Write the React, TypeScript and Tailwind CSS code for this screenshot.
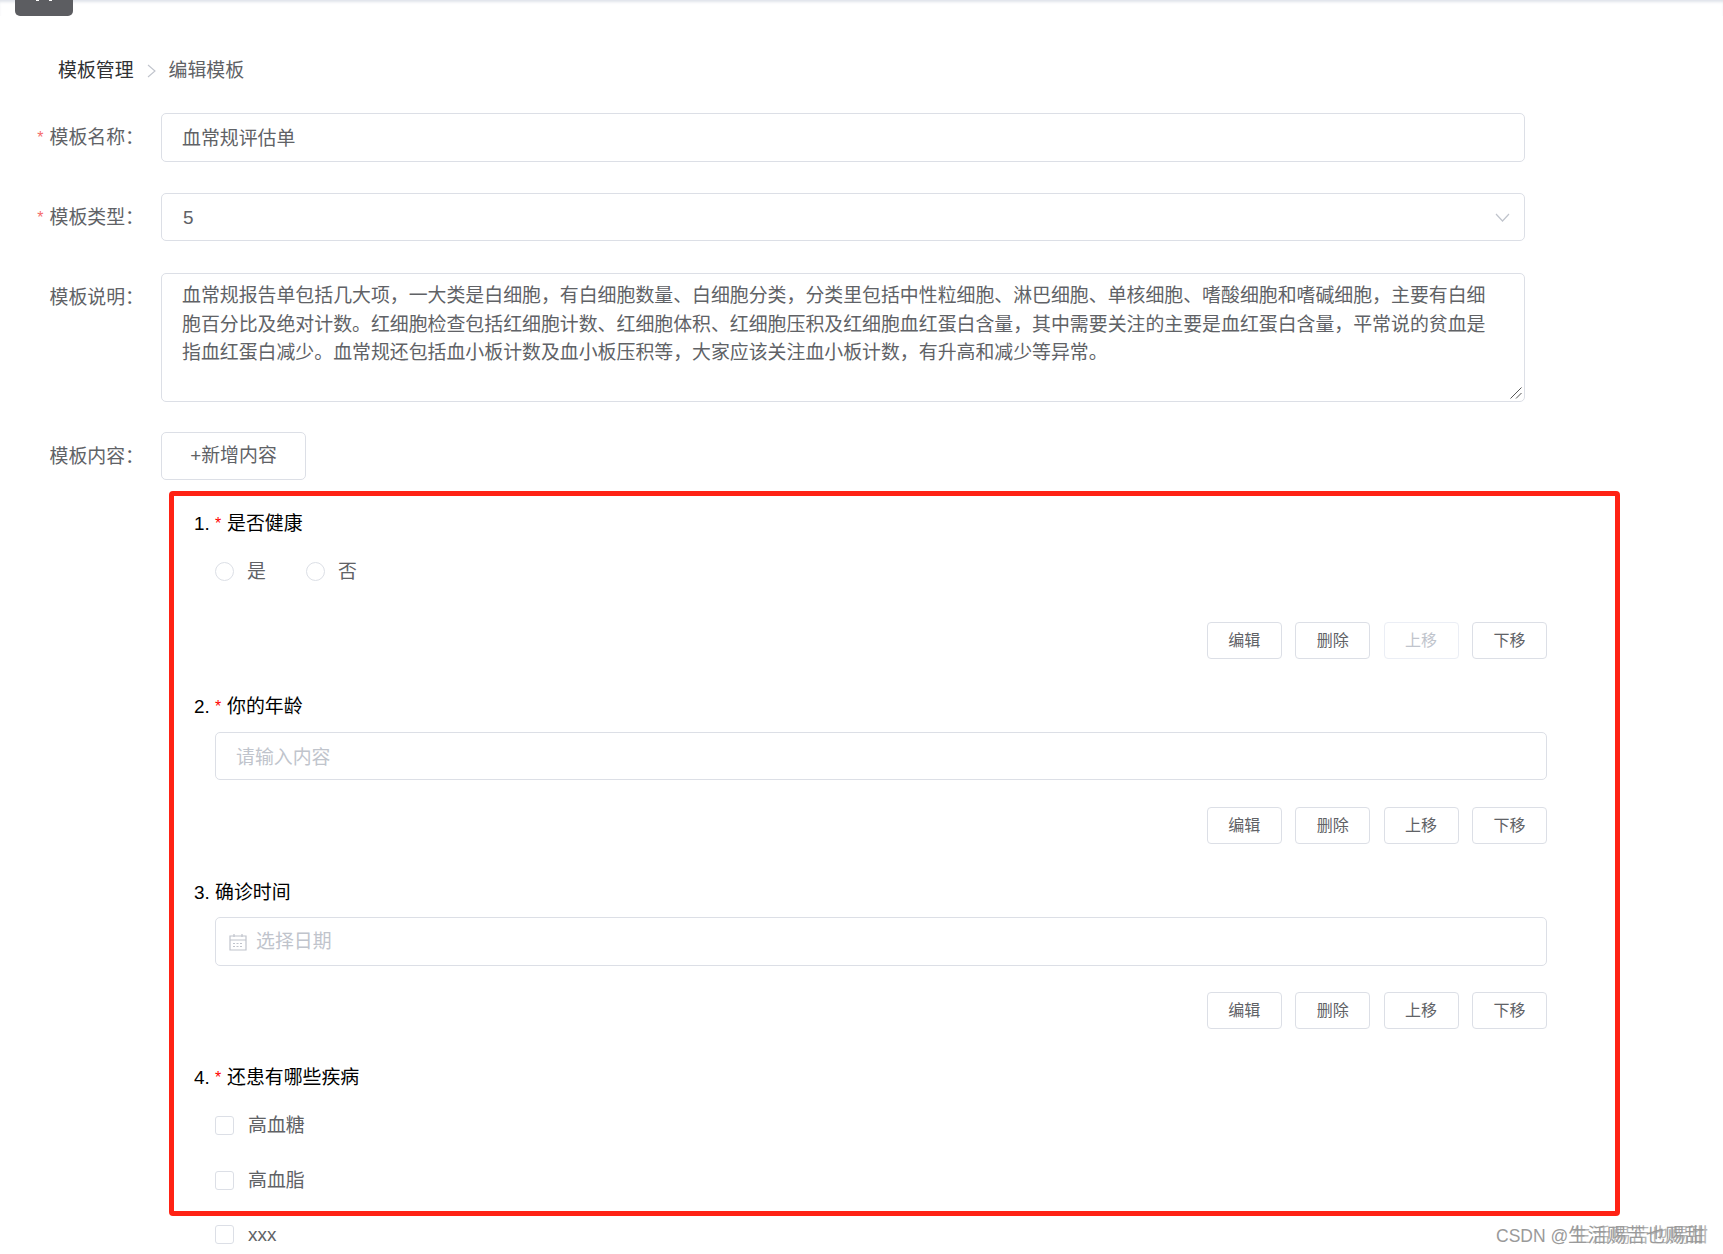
const font = { fontFamily: '"Liberation Sans", "Noto Sans CJK SC", sans-serif' }

function ActionButtons({ upDisabled }: { upDisabled?: boolean }) {
  const labels = ['编辑', '删除', '上移', '下移']
  return (
    <div className="flex justify-end gap-[13.4px]">
      {labels.map((label) => {
        const disabled = upDisabled && label === '上移'
        return (
          <button
            key={label}
            className={`h-[37px] w-[75px] rounded-[4px] border bg-white text-[16px] ${
              disabled ? 'border-[#ebeef5] text-[#c0c4cc]' : 'border-[#dcdfe6] text-[#606266]'
            }`}
          >
            {label}
          </button>
        )
      })}
    </div>
  )
}

function QuestionTitle({ index, title, required }: { index: number; title: string; required?: boolean }) {
  return (
    <div className="flex h-[28px] items-center text-[18.9px] leading-[28px] text-black">
      <span className="w-[21px]">{index}.</span>
      {required && <span className="w-[12px] text-[16px] text-[#ff0000]">*</span>}
      <span>{title}</span>
    </div>
  )
}

function FormRow({ label, required, children }: { label: string; required?: boolean; children: React.ReactNode }) {
  return (
    <div className="flex">
      <label className="flex h-[46px] w-[144px] shrink-0 items-center justify-end pt-[4px] text-[18.9px] text-[#606266]">
        {required && <span className="mr-[6px] text-[16px] text-[#f56c6c]">*</span>}
        {label}：
      </label>
      <div className="ml-[17px] w-[1364px]">{children}</div>
    </div>
  )
}

function CheckItem({ label }: { label: string }) {
  return (
    <div className="flex h-[19px] items-center gap-[14px] text-[18.9px] text-[#606266]">
      <span className="h-[19px] w-[19px] rounded-[3px] border border-[#dcdfe6] bg-white" />
      <span className="pt-[2px]">{label}</span>
    </div>
  )
}

export default function App() {
  return (
    <div className="relative h-[1254px] w-full overflow-hidden bg-white" style={font}>
      {/* Top bar */}
      <div className="h-[16px] shadow-[inset_0_3px_3px_-1px_#dfe3ea]">
        <div className="ml-[15px] flex h-[16px] w-[58px] justify-center gap-[10px] rounded-b-[5px] bg-[#5c5d61]">
          <span className="h-[1px] w-[3px] bg-white" />
          <span className="h-[1px] w-[3px] bg-white" />
        </div>
      </div>

      {/* Breadcrumb */}
      <div className="mt-[40px] ml-[58px] flex h-[28px] items-center pt-[2px] text-[18.9px] leading-[28px]">
        <span className="text-[#303133]">模板管理</span>
        <svg className="mx-[9.5px] h-[16px] w-[16px] text-[#c0c4cc]" viewBox="0 0 16 16" fill="none" stroke="currentColor" strokeWidth="1.1">
          <path d="M5 2l7 6-7 6" />
        </svg>
        <span className="text-[#606266]">编辑模板</span>
      </div>

      <div className="mt-[29px] flex flex-col">
        <FormRow label="模板名称" required>
          <div className="flex h-[49px] items-center rounded-[5px] border border-[#dcdfe6] px-[20px] pt-[3px] text-[18.9px] text-[#606266]">
            血常规评估单
          </div>
        </FormRow>
        <div className="mt-[31px]">
          <FormRow label="模板类型" required>
            <div className="flex h-[48px] items-center justify-between rounded-[5px] border border-[#dcdfe6] pr-[14px] pl-[21px] text-[18.9px] text-[#606266]">
              <span className="pt-[2px]">5</span>
              <svg className="h-[15px] w-[15px] text-[#c0c4cc]" viewBox="0 0 15 15" fill="none" stroke="currentColor" strokeWidth="1.2">
                <path d="M1 4l6.5 7L14 4" />
              </svg>
            </div>
          </FormRow>
        </div>
        <div className="mt-[32px]">
          <FormRow label="模板说明">
            <div className="relative h-[129px] rounded-[5px] border border-[#dcdfe6] px-[20px] pt-[8px] text-[18.9px] leading-[28.5px] text-[#606266]">
              <div className="w-[1310px]">
                血常规报告单包括几大项，一大类是白细胞，有白细胞数量、白细胞分类，分类里包括中性粒细胞、淋巴细胞、单核细胞、嗜酸细胞和嗜碱细胞，主要有白细胞百分比及绝对计数。红细胞检查包括红细胞计数、红细胞体积、红细胞压积及红细胞血红蛋白含量，其中需要关注的主要是血红蛋白含量，平常说的贫血是指血红蛋白减少。血常规还包括血小板计数及血小板压积等，大家应该关注血小板计数，有升高和减少等异常。
              </div>
              <svg className="absolute right-[2px] bottom-[2px] h-[12px] w-[12px] text-[#555]" viewBox="0 0 12 12" fill="none" stroke="currentColor" strokeWidth="1">
                <path d="M0.5 11.5L11.5 0.5M6 11.5L11.5 6" />
              </svg>
            </div>
          </FormRow>
        </div>
        <div className="mt-[30px]">
          <FormRow label="模板内容">
            <button className="h-[48px] w-[145px] rounded-[5px] border border-[#dcdfe6] text-[18.9px] text-[#606266]">
              +新增内容
            </button>
          </FormRow>
        </div>
      </div>

      {/* Questions */}
      <div className="mt-[30px] ml-[194px] w-[1353px]">
        <QuestionTitle index={1} title="是否健康" required />
        <div className="mt-[24px] ml-[21px] flex h-[19px] items-center text-[18.9px] text-[#606266]">
          <span className="h-[19px] w-[19px] rounded-full border border-[#dcdfe6]" />
          <span className="ml-[13px] pt-[1px]">是</span>
          <span className="ml-[40px] h-[19px] w-[19px] rounded-full border border-[#dcdfe6]" />
          <span className="ml-[13px] pt-[1px]">否</span>
        </div>
        <div className="mt-[41px]">
          <ActionButtons upDisabled />
        </div>

        <div className="mt-[34px]">
          <QuestionTitle index={2} title="你的年龄" required />
        </div>
        <div className="mt-[11px] ml-[21px] flex h-[48px] items-center rounded-[5px] border border-[#dcdfe6] px-[20px] pt-[4px] text-[18.9px] text-[#c0c4cc]">
          请输入内容
        </div>
        <div className="mt-[27px]">
          <ActionButtons />
        </div>

        <div className="mt-[35px]">
          <QuestionTitle index={3} title="确诊时间" />
        </div>
        <div className="mt-[10px] ml-[21px] flex h-[49px] items-center gap-[9px] rounded-[5px] border border-[#dcdfe6] pl-[13px] text-[18.9px] text-[#c0c4cc]">
          <svg className="h-[18px] w-[18px]" viewBox="0 0 18 18" fill="none" stroke="currentColor" strokeWidth="1.2">
            <path d="M1 3h16v14H1zM1 7h16M5 1v3M13 1v3" />
            <path d="M4 10.5h10M4 13.5h10" strokeDasharray="2 1.5" />
          </svg>
          <span className="pt-[2px]">选择日期</span>
        </div>
        <div className="mt-[26px]">
          <ActionButtons />
        </div>

        <div className="mt-[35px]">
          <QuestionTitle index={4} title="还患有哪些疾病" required />
        </div>
        <div className="mt-[24px] ml-[21px] flex flex-col gap-[35.5px]">
          <CheckItem label="高血糖" />
          <CheckItem label="高血脂" />
          <CheckItem label="xxx" />
        </div>
      </div>

      {/* Red annotation box */}
      <div className="pointer-events-none absolute top-[491px] left-[169px] h-[725px] w-[1451px] rounded-[4px] border-[5px] border-[#ff2214]" />

      {/* Watermark */}
      <div className="absolute top-[1224px] left-[1496px] h-[24px] text-[17.5px] leading-[24px] whitespace-nowrap text-[#9a9a9a]">
        CSDN @
        <span className="absolute top-0 left-[72px] text-[19px] tracking-[0.5px]">生活赐苦也赐甜</span>
        <span className="absolute top-0 left-[76px] text-[19px] tracking-[0.5px] opacity-70">生活赐苦也赐甜</span>
      </div>
    </div>
  )
}
